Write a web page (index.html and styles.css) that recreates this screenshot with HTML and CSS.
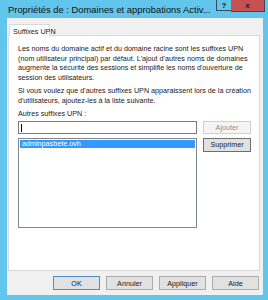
FILE: index.html
```html
<!DOCTYPE html>
<html lang="fr">
<head>
    <title>Propriétés de : Domaines et approbations Active Directory</title>
    <link rel="stylesheet" href="styles.css">
</head>
<body>
    <div class="window">
        <div class="titlebar">
            <span class="title">Propriétés de : Domaines et approbations Activ...</span>
            <span class="caption-btn help">?</span>
            <span class="caption-btn close">x</span>
        </div>

        <div class="client">
            <div class="tabs">
                <div class="tab">Suffixes UPN</div>
            </div>

            <div class="page">
                <p>Les noms du domaine actif et du domaine racine sont les suffixes UPN<br>
                (nom utilisateur principal) par défaut. L'ajout d'autres noms de domaines<br>
                augmente la sécurité des sessions et simplifie les noms d'ouverture de<br>
                session des utilisateurs.</p>

                <p>Si vous voulez que d'autres suffixes UPN apparaissent lors de la création<br>
                d'utilisateurs, ajoutez-les à la liste suivante.</p>

                <label for="suffix">Autres suffixes UPN :</label>
                <div class="row">
                    <div class="textbox" id="suffix"><span class="caret"></span></div>
                    <button class="btn" disabled>Ajouter</button>
                </div>
                <div class="row">
                    <div class="listbox">
                        <div class="item selected">adminpasbete.ovh</div>
                    </div>
                    <button class="btn focused">Supprimer</button>
                </div>
            </div>

            <div class="footer">
                <button class="btn default">OK</button>
                <button class="btn">Annuler</button>
                <button class="btn">Appliquer</button>
                <button class="btn">Aide</button>
            </div>
        </div>
    </div>
</body>
</html>
```

FILE: styles.css
```css
body {
    margin: 0;
    padding: 0;
    background-color: #62c6ec;
    font-family: "Liberation Sans", Arial, sans-serif;
    font-size: 7.2px;
    color: #1a1a1a;
}

.window {
    width: 268px;
    height: 300px;
    display: flex;
    flex-direction: column;
}

.titlebar {
    height: 18px;
    position: relative;
}

.title {
    display: block;
    font-size: 9.4px;
    line-height: 12px;
    color: #111;
    padding: 4px 0 0 8px;
    white-space: nowrap;
}

.caption-btn {
    position: absolute;
    top: 0;
    height: 11px;
    line-height: 11px;
    text-align: center;
    font-weight: bold;
    font-size: 8px;
    box-sizing: border-box;
}

.help {
    left: 216px;
    width: 16px;
    border: 1px solid #3a4a58;
    border-top: none;
    background-color: #62c6ec;
    color: #111;
}

.close {
    left: 231px;
    width: 34px;
    height: 12px;
    line-height: 12px;
    border: 1px solid #3a4a58;
    border-top: none;
    border-left: none;
    background-color: #c75050;
    color: #1e1e1e;
}

.client {
    margin: 0 5px 5px 7px;
    background-color: #f0f0f0;
    flex: 1;
    display: flex;
    flex-direction: column;
}

.tabs {
    padding: 6px 0 0 2px;
    display: flex;
    position: relative;
    z-index: 1;
}

.tab {
    width: 41px;
    height: 12px;
    box-sizing: border-box;
    border: 1px solid #d9d9d9;
    border-bottom: none;
    background-color: #fff;
    padding: 2px 0 0 3px;
    white-space: nowrap;
}

.page {
    margin: -1px 3px 0 1px;
    height: 236px;
    box-sizing: border-box;
    border: 1px solid #d9d9d9;
    background-color: #fff;
    padding: 8px 0 0 9px;
}

.page p {
    margin: 0 0 4px;
    line-height: 9.5px;
    white-space: nowrap;
}

label {
    display: block;
    line-height: 9.5px;
}

.row {
    display: flex;
    align-items: flex-start;
    gap: 6px;
    margin-top: 2px;
}

.row + .row {
    margin-top: 4px;
}

.textbox {
    width: 179px;
    height: 13px;
    box-sizing: border-box;
    border: 1px solid #7a7a7a;
    background-color: #fff;
    padding: 2px 0 0 2px;
}

.caret {
    display: block;
    width: 1px;
    height: 8px;
    background-color: #000;
}

.listbox {
    width: 179px;
    height: 90px;
    box-sizing: border-box;
    border: 1px solid #828790;
    background-color: #fff;
    padding: 1px;
}

.item {
    height: 8px;
    line-height: 8px;
    padding-left: 2px;
}

.item.selected {
    background-color: #3399ff;
    color: #fff;
}

.btn {
    width: 48px;
    height: 13px;
    padding: 0;
    box-sizing: border-box;
    border: 1px solid #acacac;
    background-color: #e1e1e1;
    font-family: "Liberation Sans", Arial, sans-serif;
    font-size: 7.2px;
    color: #1a1a1a;
}

.btn:disabled {
    border-color: #cfcfcf;
    background-color: #f4f4f4;
    color: #8f8f8f;
}

.btn.focused {
    height: 14px;
    border-color: #6f6f6f;
}

.btn.default {
    border-color: #4d8ec9;
}

.footer {
    display: flex;
    justify-content: flex-end;
    gap: 6px;
    padding: 5px 4px 0 0;
}

.footer .btn {
    width: 47px;
    height: 14px;
}
```
